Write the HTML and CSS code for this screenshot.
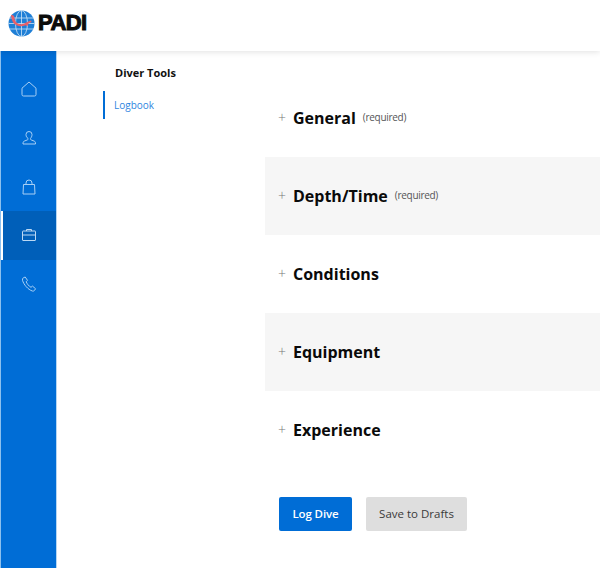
FILE: index.html
```html
<!DOCTYPE html>
<html lang="en">
<head>
<meta charset="utf-8">
<title>PADI Logbook</title>
<link rel="stylesheet" href="styles.css">
</head>
<body>
<header class="topbar">
  <div class="logo">
    <svg class="globe" width="27" height="27" viewBox="0 0 27 27" aria-hidden="true">
      <circle cx="13.5" cy="13.5" r="13" fill="#1f7fd6"/>
      <g fill="none" stroke="#cfe4f6" stroke-width=".8">
        <ellipse cx="13.5" cy="13.5" rx="6" ry="13"/>
        <path d="M13.5 .5v26M1 8h25M.5 13.5h26M1 19h25"/>
      </g>
      <path d="M3 5c2.500-.5 3.500 1 3.500 3S8 13 11 14c3 .7 5-.2 7-1.500l5-2 .5 1.500-3 1.500-1 2.500-2-.8c-3 1.300-6 1.300-9 0C5 14 3.500 10 3 5z" fill="#e8606a"/>
    </svg>
    <span class="wordmark">PADI</span>
  </div>
</header>
<div class="shell">
  <nav class="rail">
    <a class="rail-item">
      <svg width="16" height="16" viewBox="0 0 16 16"><path d="M1 7.200 8 1l7 6.200v6.300a1.500 1.500 0 0 1-1.500 1.500h-11A1.500 1.500 0 0 1 1 13.500z"/></svg>
    </a>
    <a class="rail-item">
      <svg width="16" height="16" viewBox="0 0 16 16"><path d="M5 4.500a3 3 0 0 1 6 0c0 2-.8 3-1.400 3.800-.4.600-.2 1.300.5 1.600l3.100 1.200c1 .4 1.300 1 1.300 2.900H2c0-1.900.3-2.500 1.300-2.900l3.100-1.200c.7-.3.9-1 .5-1.600C5.800 7.500 5 6.500 5 4.500z"/></svg>
    </a>
    <a class="rail-item">
      <svg width="16" height="16" viewBox="0 0 16 16"><path d="M2.500 5.500h11l.5 9.500H2z"/><path d="M5 5.500V4a3 3 0 0 1 6 0v1.500"/></svg>
    </a>
    <a class="rail-item is-active">
      <svg width="16" height="16" viewBox="0 0 16 16"><rect x="1.500" y="4" width="13" height="9.500" rx=".5"/><path d="M5.500 4V2.500h5V4M1.500 8h13"/></svg>
    </a>
    <a class="rail-item">
      <svg class="phone" width="16" height="16" viewBox="0 0 16 16"><path d="M2.300 1.800 4.200 1l2.300 3.400-1.300 1.300c.7 2 2.700 4.500 4.800 5.600l1.500-1.200 3 2.600-.9 1.600c-.5.700-1.400 1-2.300.7C7 13.500 2.800 8.700 1.500 4.300c-.2-1 .1-2 .8-2.500z"/></svg>
    </a>
  </nav>
  <aside class="subnav">
    <h2 class="subnav-title">Diver Tools</h2>
    <a class="subnav-link"><span class="subnav-label">Logbook</span></a>
  </aside>
  <main class="content">
    <section class="row"><span class="plus">+</span><h3 class="row-title">General</h3><span class="req">(required)</span></section>
    <section class="row is-shaded"><span class="plus">+</span><h3 class="row-title">Depth/Time</h3><span class="req">(required)</span></section>
    <section class="row"><span class="plus">+</span><h3 class="row-title">Conditions</h3></section>
    <section class="row is-shaded"><span class="plus">+</span><h3 class="row-title">Equipment</h3></section>
    <section class="row"><span class="plus">+</span><h3 class="row-title">Experience</h3></section>
    <div class="actions">
      <button class="btn btn-primary">Log Dive</button>
      <button class="btn btn-muted">Save to Drafts</button>
    </div>
  </main>
</div>
</body>
</html>
```

FILE: styles.css
```css
* { box-sizing: border-box; }
html, body { margin: 0; height: 100%; overflow: hidden; }
body { font-family: "Open Sans", sans-serif; background: #fff; color: #000; }

.topbar {
  height: 51px;
  background: #fff;
  box-shadow: 0 1px 6px rgba(0, 0, 0, .12);
  position: relative;
  z-index: 2;
  display: flex;
  align-items: center;
  padding: 0 0 5px 8px;
}
.logo { display: flex; align-items: center; gap: 3px; }
.globe { display: block; }
.wordmark {
  font-family: "Liberation Sans", sans-serif;
  font-weight: 700;
  font-size: 22px;
  line-height: 1;
  letter-spacing: -.6px;
  color: #0b0b0b;
  -webkit-text-stroke: 1px #0b0b0b;
}

.shell { display: flex; height: 517px; }

.rail {
  width: 57px;
  flex: none;
  background: #006dd6;
  border-left: 1px solid #8cc0ee;
  border-right: 1px solid #b5d6f3;
  padding-top: 13px;
}
.rail-item {
  height: 49px;
  display: flex;
  align-items: center;
  justify-content: center;
}
.rail-item svg {
  fill: none;
  stroke: #a9d0f5;
  stroke-width: 1;
  stroke-linejoin: round;
}
.rail-item svg.phone { margin-bottom: 2px; }
.rail-item.is-active {
  background: #005fb9;
  box-shadow: inset 2px 0 0 #fff;
}
.rail-item.is-active svg { stroke: #bcd9f4; margin-bottom: 2px; }

.subnav { width: 208px; flex: none; padding: 13px 0 0 46px; }
.subnav-title {
  margin: 0 0 10px;
  padding-left: 12px;
  font-size: 11px;
  line-height: 17px;
  font-weight: 700;
  color: #111;
}
.subnav-link {
  display: flex;
  align-items: center;
  height: 28px;
  padding: 0 0 1px 9px;
  border-left: 2px solid #006dd6;
  font-size: 10px;
  color: #2f86e0;
}
.subnav-label { display: block; }

.content { flex: 1; padding-top: 28px; }
.row {
  height: 78px;
  display: flex;
  align-items: center;
  padding-left: 14px;
}
.row.is-shaded { background: #f6f6f6; }
.plus {
  width: 15px;
  margin-left: -1px;
  font-size: 14px;
  font-weight: 300;
  color: #777;
  line-height: 1;
}
.row-title {
  margin: 0;
  font-size: 16px;
  line-height: 24px;
  font-weight: 700;
  color: #0a0a0a;
}
.req {
  margin-left: 7px;
  margin-bottom: 2px;
  font-size: 10px;
  letter-spacing: -.3px;
  color: #555;
}

.actions { display: flex; gap: 14px; padding: 28px 0 0 14px; }
.btn {
  height: 34px;
  border: 0;
  border-radius: 2px;
  font-family: inherit;
  font-size: 11.5px;
  padding: 0 0 2px;
}
.btn-primary { width: 73px; background: #006dd6; color: #fff; font-weight: 600; letter-spacing: -.1px; }
.btn-muted { width: 101px; background: #dedede; color: #3a3a3a; }
```
